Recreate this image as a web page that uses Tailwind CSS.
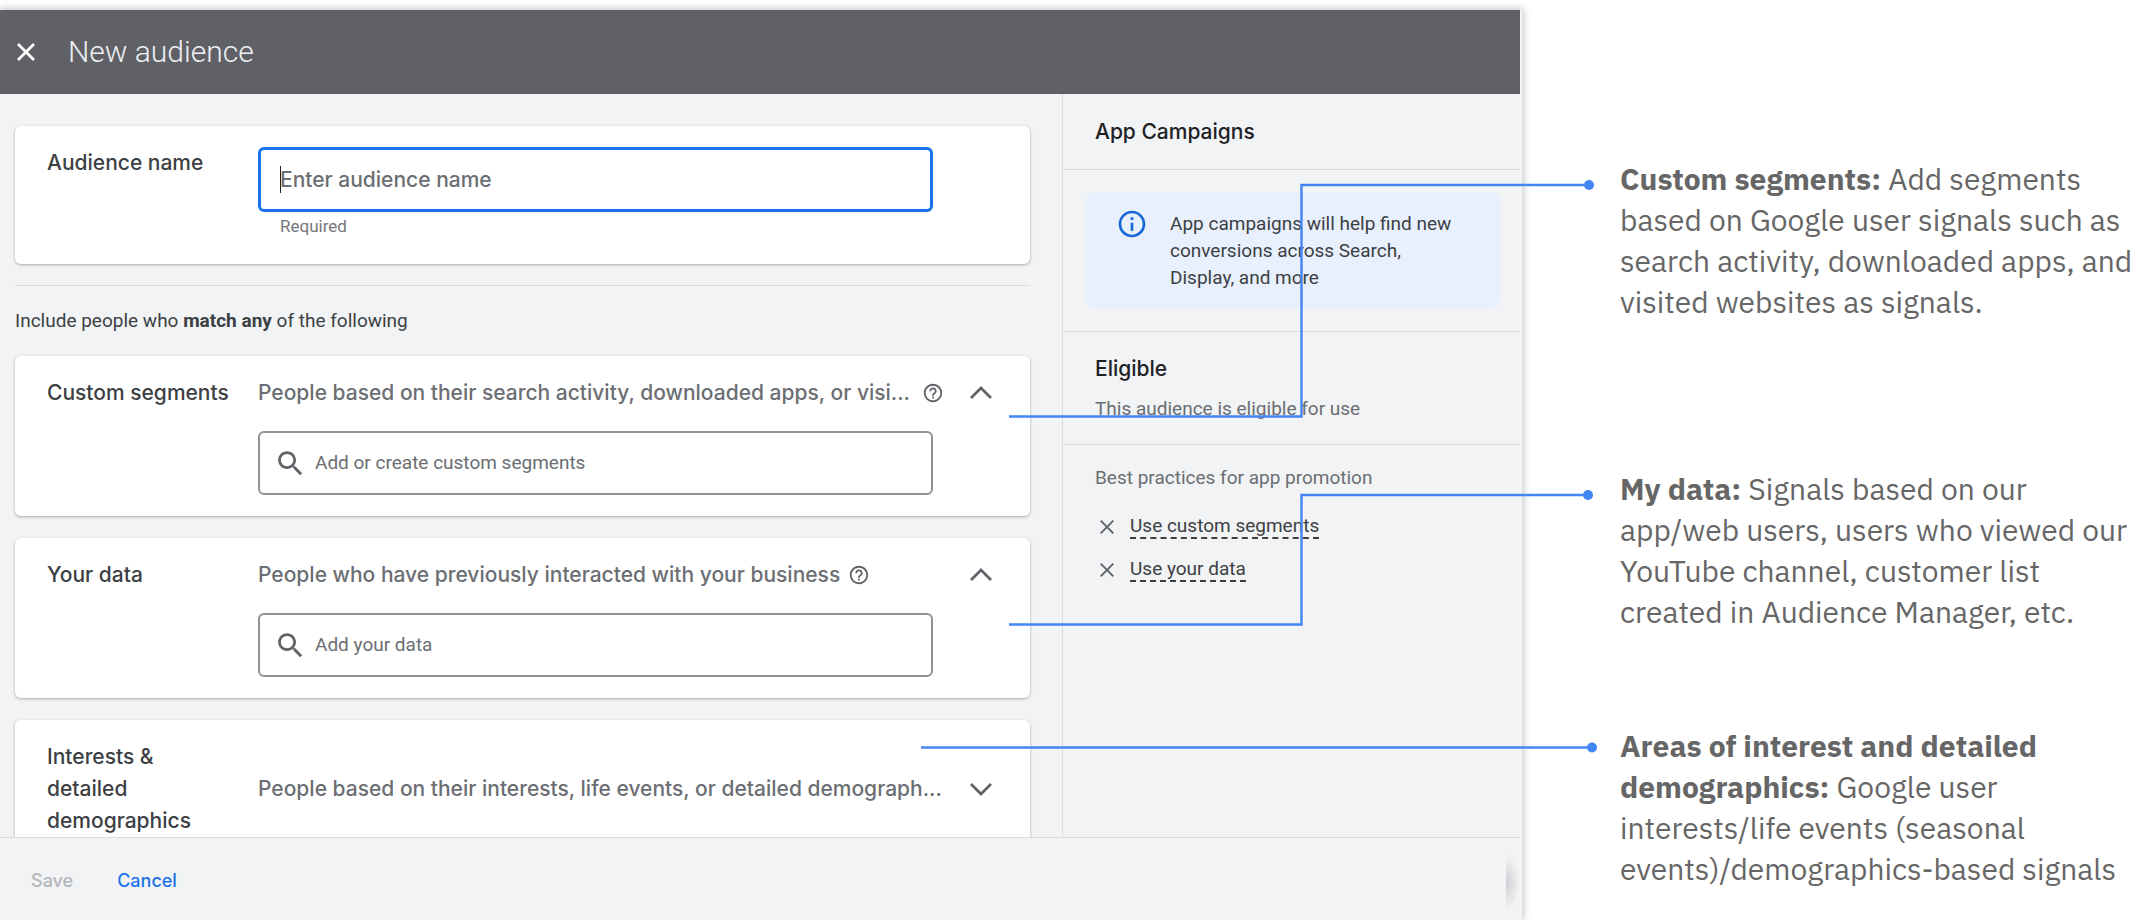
<!DOCTYPE html>
<html lang="en">
<head>
    <meta charset="UTF-8">
    <meta name="viewport" content="width=device-width, initial-scale=1.0">
    <title>New audience</title>
    <script src="https://cdn.jsdelivr.net/npm/@tailwindcss/browser@4"></script>
</head>
<body class="h-screen flex overflow-hidden bg-white font-['Roboto',sans-serif] text-[19px] leading-7 text-[#3c4043]">

    <!-- Audience builder -->
    <div class="relative flex-1 min-w-0 flex flex-col pt-2.5">
        <div class="flex-1 min-h-0 flex flex-col pr-0.5 bg-[#f1f3f5] shadow-[0_0_8px_1px_rgba(0,0,0,0.25)]">

            <header class="h-[84px] shrink-0 flex items-center gap-[33px] pl-[17px] bg-[#5f6167]">
                <button type="button" aria-label="Close">
                    <svg class="w-[18px] h-[18px]" viewBox="0 0 18 18" fill="none" stroke="#fff" stroke-width="2.8"><path d="M1 1l16 16M17 1L1 17"/></svg>
                </button>
                <h1 class="font-['Google_Sans','Roboto',sans-serif] text-3xl font-light text-[#eef0f3]">New audience</h1>
            </header>

            <div class="flex-1 min-h-0 flex overflow-hidden">
                <main class="flex-1 min-w-0 flex flex-col gap-[21px] pt-8 pl-[15px] pr-8">

                    <section class="shrink-0 grid grid-cols-[211px_1fr] pt-[21px] pb-[26px] pl-8 pr-[97px] bg-white rounded-md shadow-[0_1px_3px_rgba(60,64,67,0.4)]">
                        <label for="audienceName" class="font-['Google_Sans','Inter',sans-serif] text-[21px] leading-8 font-medium">Audience name</label>
                        <div>
                            <div class="relative">
                                <input type="text" id="audienceName" placeholder="Enter audience name" class="block w-full h-[65px] pl-[19px] rounded-md border-3 border-[#1a73e8] outline-none font-['Google_Sans','Inter',sans-serif] text-[21px] font-medium text-[#3c4043] placeholder:text-[#6b6e72]">
                                <span class="absolute left-[22px] top-[19px] w-px h-[27px] bg-[#202124]"></span>
                            </div>
                            <p class="mt-0.5 pl-[22px] text-[17px] leading-6 text-[#757779]">Required</p>
                        </div>
                    </section>

                    <hr class="shrink-0 border-[#dadce0]">
                    <p class="shrink-0">Include people who <b class="font-bold">match any</b> of the following</p>

                    <div class="shrink-0 flex flex-col gap-[22px]">
                        <section class="grid grid-cols-[211px_1fr] py-[21px] pl-8 bg-white rounded-md shadow-[0_1px_3px_rgba(60,64,67,0.4)]">
                            <h2 class="font-['Google_Sans','Inter',sans-serif] text-[21px] leading-8 font-medium">Custom segments</h2>
                            <div class="min-w-0 flex items-center pr-[37px]">
                                <p class="font-['Google_Sans','Inter',sans-serif] text-[21px] leading-8 font-medium text-[#6b6e72] truncate">People based on their search activity, downloaded apps, or visi...</p>
                                <button type="button" aria-label="Help" class="ml-3 shrink-0">
                                    <svg class="w-[22px] h-[22px]" viewBox="0 0 24 24" fill="#5f6368"><path d="M11 18h2v-2h-2v2zm1-16C6.480 2 2 6.480 2 12s4.480 10 10 10 10-4.480 10-10S17.520 2 12 2zm0 18c-4.410 0-8-3.590-8-8s3.590-8 8-8 8 3.590 8 8-3.590 8-8 8zm0-14c-2.210 0-4 1.790-4 4h2c0-1.100.9-2 2-2s2 .9 2 2c0 2-3 1.750-3 5h2c0-2.250 3-2.500 3-5 0-2.210-1.790-4-4-4z"/></svg>
                                </button>
                                <button type="button" aria-label="Collapse custom segments" class="ml-auto shrink-0">
                                    <svg class="w-6 h-6" viewBox="0 0 24 24" fill="none" stroke="#5f6368" stroke-width="2.8"><path d="M2 17l10-10 10 10"/></svg>
                                </button>
                            </div>
                            <label class="col-start-2 mt-[22px] mr-[97px] h-16 flex items-center gap-2 pl-3.5 rounded-md border-2 border-[#8f9296]">
                                <svg class="w-[33px] h-[33px] shrink-0" viewBox="0 0 24 24" fill="#5f6368"><path d="M15.500 14h-.79l-.28-.27C15.410 12.590 16 11.110 16 9.500 16 5.910 13.090 3 9.500 3S3 5.910 3 9.500 5.910 16 9.500 16c1.610 0 3.090-.59 4.230-1.570l.27.28v.79l5 4.990L20.490 19l-4.990-5zm-6 0C7.010 14 5 11.990 5 9.500S7.010 5 9.500 5 14 7.010 14 9.500 11.990 14 9.500 14z"/></svg>
                                <input type="text" aria-label="Custom segments" placeholder="Add or create custom segments" class="flex-1 min-w-0 outline-none placeholder:text-[#6b6e72]">
                            </label>
                        </section>

                        <section class="grid grid-cols-[211px_1fr] py-[21px] pl-8 bg-white rounded-md shadow-[0_1px_3px_rgba(60,64,67,0.4)]">
                            <h2 class="font-['Google_Sans','Inter',sans-serif] text-[21px] leading-8 font-medium">Your data</h2>
                            <div class="min-w-0 flex items-center pr-[37px]">
                                <p class="font-['Google_Sans','Inter',sans-serif] text-[21px] leading-8 font-medium text-[#6b6e72] truncate">People who have previously interacted with your business</p>
                                <button type="button" aria-label="Help" class="ml-2 shrink-0">
                                    <svg class="w-[22px] h-[22px]" viewBox="0 0 24 24" fill="#5f6368"><path d="M11 18h2v-2h-2v2zm1-16C6.480 2 2 6.480 2 12s4.480 10 10 10 10-4.480 10-10S17.520 2 12 2zm0 18c-4.410 0-8-3.590-8-8s3.590-8 8-8 8 3.590 8 8-3.590 8-8 8zm0-14c-2.210 0-4 1.790-4 4h2c0-1.100.9-2 2-2s2 .9 2 2c0 2-3 1.750-3 5h2c0-2.250 3-2.500 3-5 0-2.210-1.790-4-4-4z"/></svg>
                                </button>
                                <button type="button" aria-label="Collapse your data" class="ml-auto shrink-0">
                                    <svg class="w-6 h-6" viewBox="0 0 24 24" fill="none" stroke="#5f6368" stroke-width="2.8"><path d="M2 17l10-10 10 10"/></svg>
                                </button>
                            </div>
                            <label class="col-start-2 mt-[22px] mr-[97px] h-16 flex items-center gap-2 pl-3.5 rounded-md border-2 border-[#8f9296]">
                                <svg class="w-[33px] h-[33px] shrink-0" viewBox="0 0 24 24" fill="#5f6368"><path d="M15.500 14h-.79l-.28-.27C15.410 12.590 16 11.110 16 9.500 16 5.910 13.090 3 9.500 3S3 5.910 3 9.500 5.910 16 9.500 16c1.610 0 3.090-.59 4.230-1.570l.27.28v.79l5 4.990L20.490 19l-4.990-5zm-6 0C7.010 14 5 11.990 5 9.500S7.010 5 9.500 5 14 7.010 14 9.500 11.990 14 9.500 14z"/></svg>
                                <input type="text" aria-label="Your data" placeholder="Add your data" class="flex-1 min-w-0 outline-none placeholder:text-[#6b6e72]">
                            </label>
                        </section>

                        <section class="grid grid-cols-[211px_1fr] items-center py-[21px] pl-8 bg-white rounded-md shadow-[0_1px_3px_rgba(60,64,67,0.4)]">
                            <h2 class="w-[180px] font-['Google_Sans','Inter',sans-serif] text-[21px] leading-8 font-medium">Interests &amp;<br>detailed demographics</h2>
                            <div class="min-w-0 flex items-center pr-[37px]">
                                <p class="font-['Google_Sans','Inter',sans-serif] text-[21px] leading-8 font-medium text-[#6b6e72] truncate">People based on their interests, life events, or detailed demograph...</p>
                                <button type="button" aria-label="Expand interests and detailed demographics" class="ml-auto shrink-0">
                                    <svg class="w-6 h-6" viewBox="0 0 24 24" fill="none" stroke="#5f6368" stroke-width="2.8"><path d="M2 7l10 10 10-10"/></svg>
                                </button>
                            </div>
                        </section>
                    </div>
                </main>

                <!-- Sidebar -->
                <aside class="w-[458px] shrink-0 border-l border-[#dadce0]">
                    <div class="pt-[22px] pb-[21px] pl-8 border-b border-[#dadce0]">
                        <h2 class="font-['Google_Sans','Inter',sans-serif] text-[21px] leading-8 font-medium text-[#202124]">App Campaigns</h2>
                    </div>
                    <div class="pt-[22px] pb-[22px] pl-[22px] pr-[19px] border-b border-[#dadce0]">
                        <div class="flex gap-[22px] py-[18px] pl-[31px] pr-8 rounded-xl bg-[#e8f0fe]">
                            <div class="h-[27px] flex items-center shrink-0">
                                <svg class="w-8 h-8" viewBox="0 0 24 24" fill="#1967d2"><path d="M11 7h2v2h-2zm0 4h2v6h-2zm1-9C6.480 2 2 6.480 2 12s4.480 10 10 10 10-4.480 10-10S17.520 2 12 2zm0 18c-4.410 0-8-3.590-8-8s3.590-8 8-8 8 3.590 8 8-3.590 8-8 8z"/></svg>
                            </div>
                            <p class="leading-[27px]">App campaigns will help find new conversions across Search, Display, and more</p>
                        </div>
                    </div>
                    <div class="pt-[21px] pb-[21px] pl-8 border-b border-[#dadce0]">
                        <h2 class="font-['Google_Sans','Inter',sans-serif] text-[21px] leading-8 font-medium text-[#202124]">Eligible</h2>
                        <p class="mt-2.5 text-[#6b6e72]">This audience is eligible for use</p>
                    </div>
                    <div class="pt-[19px] pl-8">
                        <p class="text-[#6b6e72]">Best practices for app promotion</p>
                        <ul class="mt-[23px] pl-[5px] flex flex-col gap-[19px]">
                            <li class="flex items-center gap-4">
                                <svg class="w-3.5 h-3.5" viewBox="0 0 14 14" fill="none" stroke="#5f6368" stroke-width="1.9"><path d="M.7.7l12.600 12.600M13.300.7L.7 13.300"/></svg>
                                <a href="#" class="leading-[22px] border-b-2 border-dashed border-[#3c4043]">Use custom segments</a>
                            </li>
                            <li class="flex items-center gap-4">
                                <svg class="w-3.5 h-3.5" viewBox="0 0 14 14" fill="none" stroke="#5f6368" stroke-width="1.9"><path d="M.7.7l12.600 12.600M13.300.7L.7 13.300"/></svg>
                                <a href="#" class="leading-[22px] border-b-2 border-dashed border-[#3c4043]">Use your data</a>
                            </li>
                        </ul>
                    </div>
                </aside>
            </div>

            <footer class="relative h-[83px] shrink-0 flex items-center gap-11 pl-[31px] pt-1 border-t border-[#dadce0] bg-[#f1f3f5] font-['Google_Sans','Inter',sans-serif] text-lg font-medium">
                <button type="button" disabled class="text-[#b4b6b9]">Save</button>
                <button type="button" class="text-[#1a73e8]">Cancel</button>
                <span class="absolute right-0 top-4 w-3.5 h-14 bg-[radial-gradient(ellipse_at_left,rgba(60,64,67,0.2),transparent_70%)]"></span>
            </footer>
        </div>

        <!-- Connectors from the cards to their notes -->
        <svg class="absolute top-0 -right-[78px] w-[679px] h-[920px] pointer-events-none" viewBox="0 0 679 920" fill="none" stroke="#4285f4" stroke-width="2.400">
            <path d="M88 416.500H380.500V185H668"/>
            <path d="M88 624.500H380.500V495H667"/>
            <path d="M0 747.500H670"/>
            <g fill="#4285f4" stroke="none">
                <circle cx="668" cy="185" r="5"/>
                <circle cx="667" cy="495" r="5"/>
                <circle cx="671" cy="747.500" r="5"/>
            </g>
        </svg>
    </div>

    <!-- Notes -->
    <div class="w-[614px] shrink-0 pt-[158px] pl-[98px] font-['IBM_Plex_Sans','Liberation_Sans',sans-serif] text-3xl leading-[41px] text-[#666]">
        <p><b class="font-bold">Custom segments:</b> Add segments based on Google user signals such as search activity, downloaded apps, and visited websites as signals.</p>
        <p class="mt-[146px]"><b class="font-bold">My data:</b> Signals based on our app/web users, users who viewed our YouTube channel, customer list created in Audience Manager, etc.</p>
        <p class="mt-[93px]"><b class="font-bold">Areas of interest and detailed demographics:</b> Google user interests/life events (seasonal events)/demographics-based signals</p>
    </div>
</body>
</html>
